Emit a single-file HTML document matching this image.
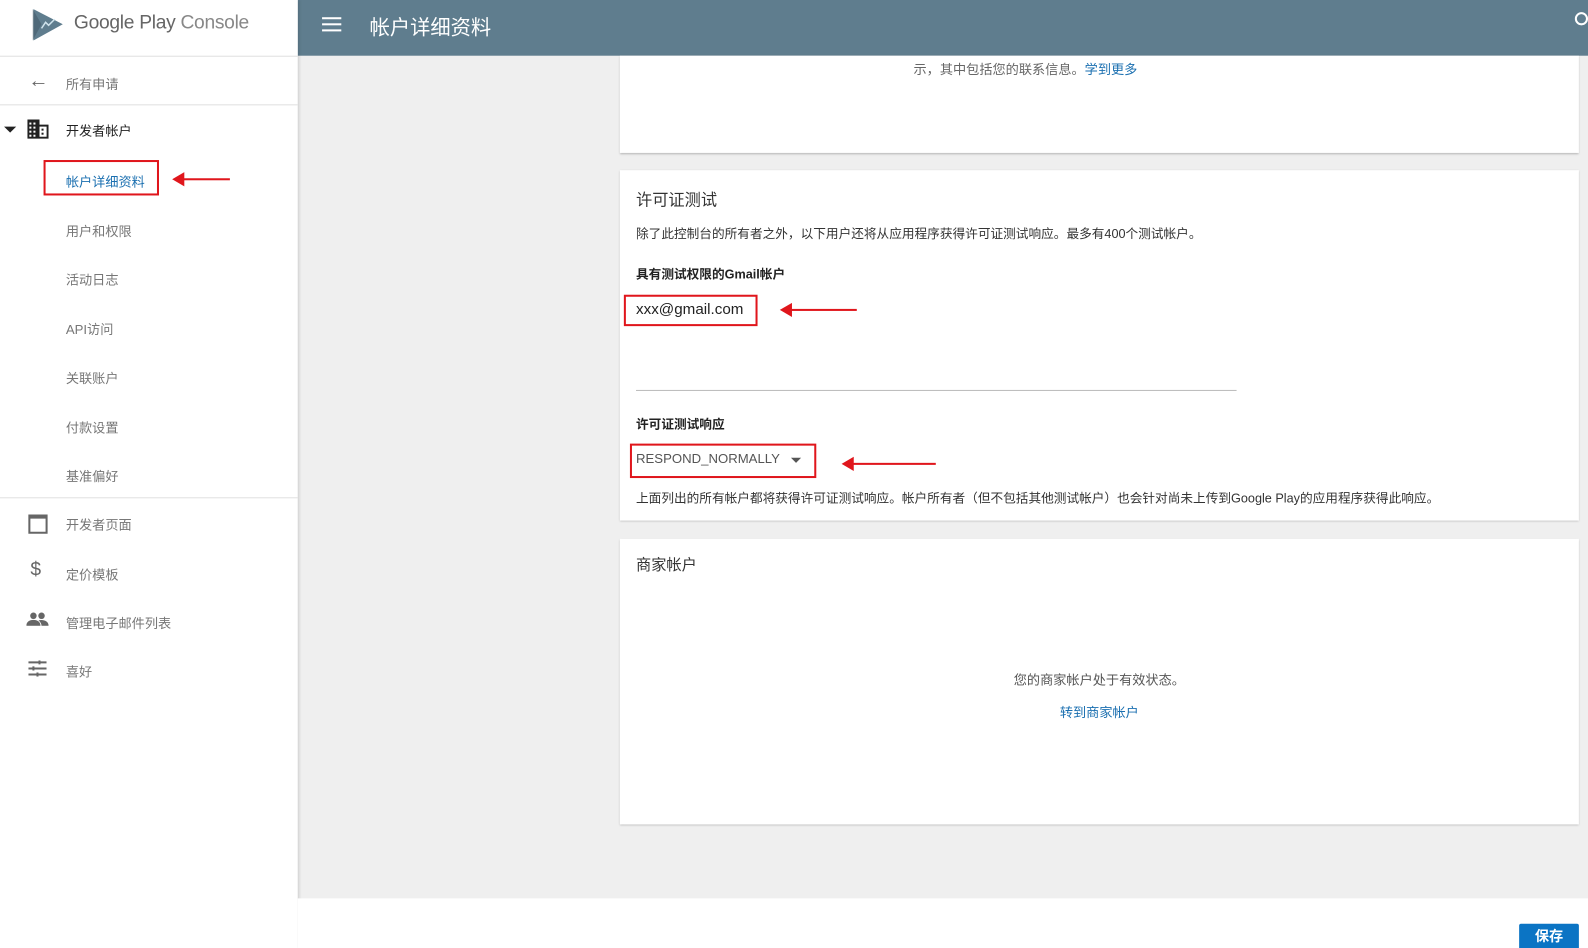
<!DOCTYPE html>
<html><head><meta charset="utf-8"><style>
html,body{margin:0;padding:0;width:1588px;height:948px;overflow:hidden;background:#f0f0f0}
#w{position:absolute;left:0;top:0;width:1568px;height:936px;transform:scale(1.01276,1.01282);transform-origin:0 0;font-family:"Liberation Sans","Noto Sans CJK SC",sans-serif;background:#efefef}
.a{position:absolute}
.side{left:0;top:0;width:294px;height:936px;background:#fff;box-shadow:1px 0 3px rgba(0,0,0,.15)}
.nav{position:absolute;left:65px;font-size:13px;color:#777}
.ic{position:absolute;left:26px}
.card{position:absolute;left:612px;width:947px;background:#fff;box-shadow:0 1px 2px rgba(0,0,0,.25)}
.red{position:absolute;border:2px solid #e0161c}
.arr{position:absolute;height:2px;background:#e0161c}
.arr:before{content:"";position:absolute;left:-10px;top:-6px;border-right:12px solid #e0161c;border-top:7px solid transparent;border-bottom:7px solid transparent}
</style></head><body><div id="w">
<div class="a" style="left:294px;top:0;width:1274px;height:55px;background:#5f7d8e"></div>
<div class="a" style="left:318px;top:17px;width:19px;height:2px;background:#fff;box-shadow:0 6px 0 #fff,0 12px 0 #fff"></div>
<div class="a" style="left:365px;top:11px;color:#fff;font-size:20px">帐户详细资料</div>
<div class="a" style="left:1555px;top:12px;width:9px;height:9px;border:2px solid #fff;border-radius:50%"></div>
<div class="a side">
<svg class="a" style="left:32px;top:7px" width="32" height="34" viewBox="0 0 32 34"><path d="M1 2 L30 17 L1 33 Z" fill="#5f7d8e"/><path d="M1 2 L30 17 L1 33 Z" fill="#3f5663" opacity=".5" transform="translate(0,0) scale(.3,1)"/><path d="M9 21 L13 15 L16 18 L22 12" stroke="#cfe3ec" stroke-width="1.5" fill="none"/></svg>
<div class="a" style="left:73px;top:12px;font-size:19px;color:#666;letter-spacing:-.3px">Google Play <span style="color:#888">Console</span></div>
<div class="a" style="left:0;top:55px;width:294px;height:1px;background:#e0e0e0"></div>
<div class="a" style="left:28px;top:69px;font-size:20px;color:#666">←</div>
<div class="nav" style="top:73px">所有申请</div>
<div class="a" style="left:0;top:103px;width:294px;height:1px;background:#e0e0e0"></div>
<div class="a" style="left:4px;top:125px;border-left:6px solid transparent;border-right:6px solid transparent;border-top:6px solid #222"></div>
<svg class="a" style="left:27px;top:118px" width="21" height="19" viewBox="0 0 21 19"><path d="M0 0h12v5h9v14H0z" fill="#222"/><g fill="#fff"><rect x="2" y="3" width="2" height="2"/><rect x="6" y="3" width="2" height="2"/><rect x="2" y="7" width="2" height="2"/><rect x="6" y="7" width="2" height="2"/><rect x="2" y="11" width="2" height="2"/><rect x="6" y="11" width="2" height="2"/><rect x="2" y="15" width="2" height="2"/><rect x="6" y="15" width="2" height="2"/><rect x="12" y="7" width="7" height="10"/></g><g fill="#222"><rect x="14" y="9" width="2" height="2"/><rect x="14" y="13" width="2" height="2"/></g></svg>
<div class="nav" style="top:119px;color:#222">开发者帐户</div>
<div class="red" style="left:43px;top:158px;width:110px;height:31px"></div>
<div class="nav" style="top:169px;color:#1a6fb0">帐户详细资料</div>
<div class="arr" style="left:180px;top:176px;width:47px"></div>
<div class="nav" style="top:218px">用户和权限</div>
<div class="nav" style="top:266px">活动日志</div>
<div class="nav" style="top:315px">API访问</div>
<div class="nav" style="top:363px">关联账户</div>
<div class="nav" style="top:412px">付款设置</div>
<div class="nav" style="top:460px">基准偏好</div>
<div class="a" style="left:0;top:491px;width:294px;height:1px;background:#e0e0e0"></div>
<div class="a" style="left:28px;top:508px;width:15px;height:13px;border:2px solid #666;border-top-width:4px"></div>
<div class="nav" style="top:508px">开发者页面</div>
<div class="a" style="left:30px;top:552px;font-size:19px;color:#666">$</div>
<div class="nav" style="top:557px">定价模板</div>
<svg class="a" style="left:26px;top:604px" width="22" height="14" viewBox="0 0 22 14"><circle cx="7" cy="4" r="3.2" fill="#666"/><circle cx="15" cy="4" r="3.2" fill="#666"/><path d="M0 14c0-4 3-6 7-6s7 2 7 6zM12 8.5c4-1 10 0 10 5.5h-7c0-2-1-4-3-5.5z" fill="#666"/></svg>
<div class="nav" style="top:605px">管理电子邮件列表</div>
<svg class="a" style="left:28px;top:652px" width="18" height="16" viewBox="0 0 18 16" stroke="#666" stroke-width="2"><path d="M0 2h18M0 8h18M0 14h18"/><path d="M11 0v4M5 6v4M9 12v4" /></svg>
<div class="nav" style="top:653px">喜好</div>
</div>
<div class="card" style="top:55px;height:96px"><div class="a" style="left:290px;top:3px;font-size:13px;color:#666">示，其中包括您的联系信息。<span style="color:#1a6fb0">学到更多</span></div></div>
<div class="card" style="top:168px;height:346px">
<div class="a" style="left:16px;top:16px;font-size:16px;color:#333">许可证测试</div>
<div class="a" style="left:16px;top:52px;font-size:12.5px;color:#333">除了此控制台的所有者之外，以下用户还将从应用程序获得许可证测试响应。最多有400个测试帐户。</div>
<div class="a" style="left:16px;top:92px;font-size:12.5px;color:#222;font-weight:bold">具有测试权限的Gmail帐户</div>
<div class="red" style="left:4px;top:123px;width:128px;height:27px"></div>
<div class="a" style="left:16px;top:129px;font-size:15px;color:#222">xxx@gmail.com</div>
<div class="arr" style="left:168px;top:137px;width:66px"></div>
<div class="a" style="left:16px;top:217px;width:593px;height:1px;background:#bbb"></div>
<div class="a" style="left:16px;top:240px;font-size:12.5px;color:#222;font-weight:bold">许可证测试响应</div>
<div class="red" style="left:10px;top:270px;width:180px;height:30px"></div>
<div class="a" style="left:16px;top:277px;font-size:13px;color:#555">RESPOND_NORMALLY</div>
<div class="a" style="left:169px;top:284px;border-left:5px solid transparent;border-right:5px solid transparent;border-top:5px solid #555"></div>
<div class="arr" style="left:229px;top:289px;width:83px"></div>
<div class="a" style="left:16px;top:313px;font-size:12.5px;color:#333">上面列出的所有帐户都将获得许可证测试响应。帐户所有者（但不包括其他测试帐户）也会针对尚未上传到Google Play的应用程序获得此响应。</div>
</div>
<div class="card" style="top:532px;height:282px">
<div class="a" style="left:16px;top:15px;font-size:15px;color:#333">商家帐户</div>
<div class="a" style="left:0;width:947px;top:129px;text-align:center;font-size:13px;color:#555">您的商家帐户处于有效状态。</div>
<div class="a" style="left:0;width:947px;top:161px;text-align:center;font-size:13px;color:#1a6fb0">转到商家帐户</div>
</div>
<div class="a" style="left:294px;top:887px;width:1274px;height:49px;background:#fff"></div>
<div class="a" style="left:1500px;top:912px;width:59px;height:24px;background:#0b74c4;border-radius:2px 2px 0 0;color:#fff;font-size:14px;text-align:center;line-height:24px;font-weight:bold">保存</div>
</div></body></html>
